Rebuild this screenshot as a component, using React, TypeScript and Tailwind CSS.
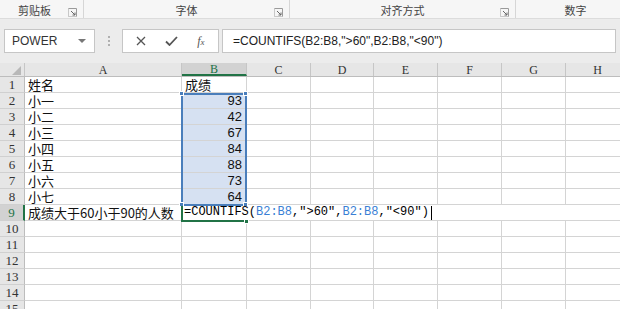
import React from "react"

const cols = [
  { k: "A", w: 157 },
  { k: "B", w: 65 },
  { k: "C", w: 64 },
  { k: "D", w: 63 },
  { k: "E", w: 64 },
  { k: "F", w: 64 },
  { k: "G", w: 64 },
  { k: "H", w: 64 },
]

const names = ["姓名", "小一", "小二", "小三", "小四", "小五", "小六", "小七", "成绩大于60小于90的人数"]
const scores = ["成绩", "93", "42", "67", "84", "88", "73", "64"]

const cjk = { fontFamily: '"Noto Sans CJK SC", "Liberation Sans", sans-serif' }
const serif = { fontFamily: '"Liberation Serif", serif' }
const mono = { fontFamily: '"Liberation Mono", "Noto Sans CJK SC", monospace' }

function Launcher() {
  return (
    <svg width="9" height="9" viewBox="0 0 9 9" className="ml-auto mt-[8px]">
      <path d="M0.5 0.5h8v8" fill="none" stroke="#9a9a9a" />
      <path d="M0.5 0.5v8h8" fill="none" stroke="#9a9a9a" strokeOpacity="0.5" />
      <path d="M3 3l4 4M7 4.5V7H4.5" fill="none" stroke="#666" />
    </svg>
  )
}

function Ribbon() {
  const groups = [
    { label: "剪贴板", w: 84, launcher: true, center: false },
    { label: "字体", w: 206, launcher: true, center: true },
    { label: "对齐方式", w: 226, launcher: true, center: true },
    { label: "数字", w: 120, launcher: false, center: true },
  ]
  return (
    <div className="flex h-[19px] bg-[#f6f6f6] border-b border-[#dcdcdc]" style={cjk}>
      {groups.map((g, i) => (
        <div
          key={i}
          className="relative flex h-full border-r border-[#d6d6d6] pr-[6px]"
          style={{ width: g.w, flex: "none" }}
        >
          <span
            className={`text-[11px] leading-[21px] text-[#444] ${g.center ? "absolute inset-x-0 text-center" : "pl-[18px]"}`}
          >
            {g.label}
          </span>
          {g.launcher && <Launcher />}
        </div>
      ))}
    </div>
  )
}

function FormulaBar() {
  return (
    <div className="flex items-center h-[44px] bg-[#ececec] px-[4px]">
      <div className="flex items-center w-[91px] h-[24px] bg-white border border-[#c6c6c6] pl-[7px] pr-[8px]">
        <span className="text-[12px] text-[#333]" style={{ fontFamily: '"Liberation Sans", sans-serif' }}>
          POWER
        </span>
        <svg width="8" height="5" viewBox="0 0 8 5" className="ml-auto">
          <path d="M0 0h8L4 4z" fill="#777" />
        </svg>
      </div>
      <div className="flex flex-col gap-[2px] w-[27px] items-center">
        <span className="w-[2px] h-[2px] bg-[#b0b0b0]" />
        <span className="w-[2px] h-[2px] bg-[#b0b0b0]" />
        <span className="w-[2px] h-[2px] bg-[#b0b0b0]" />
      </div>
      <div className="flex items-center justify-around w-[97px] h-[24px] bg-white border border-[#c6c6c6] px-[4px]">
        <svg width="10" height="10" viewBox="0 0 10 10">
          <path d="M1 1l8 8M9 1L1 9" stroke="#555" strokeWidth="1.3" />
        </svg>
        <svg width="13" height="10" viewBox="0 0 13 10">
          <path d="M1 5.5l3.5 3.5L12 1" fill="none" stroke="#555" strokeWidth="1.8" />
        </svg>
        <span className="text-[12px] italic text-[#555]" style={serif}>
          f<span className="text-[9px]">x</span>
        </span>
      </div>
      <div className="flex items-center flex-1 h-[24px] bg-white border border-[#c6c6c6] ml-[3px] pl-[10px]">
        <span className="text-[12px] text-[#222]" style={{ fontFamily: '"Liberation Sans", sans-serif' }}>
          =COUNTIFS(B2:B8,"&gt;60",B2:B8,"&lt;90")
        </span>
      </div>
    </div>
  )
}

function Sheet() {
  const rows = 15
  return (
    <div className="relative">
      {/* header row */}
      <div className="flex h-[14px] bg-[#e6e6e6] border-b border-[#bdbdbd]">
        <div className="relative w-[25px] flex-none border-r border-[#c6c6c6]">
          <svg width="9" height="9" viewBox="0 0 9 9" className="absolute right-[3px] bottom-[1px]">
            <path d="M9 0v9H0z" fill="#b8b8b8" />
          </svg>
        </div>
        {cols.map((c) => (
          <div
            key={c.k}
            className={`flex-none flex items-center justify-center text-[12px] leading-none border-r border-[#c6c6c6] ${
              c.k === "B" ? "bg-[#d2d2d2] text-[#217346] border-b-2 border-b-[#217346]" : "text-[#333]"
            }`}
            style={{ width: c.w, ...serif }}
          >
            {c.k}
          </div>
        ))}
      </div>
      {Array.from({ length: rows }).map((_, r) => {
        const rn = r + 1
        const isActive = rn === 9
        return (
          <div key={rn} className="flex h-[16px]">
            <div
              className={`w-[25px] flex-none flex items-center justify-center text-[13px] leading-none border-b border-[#d0d0d0] ${
                isActive
                  ? "bg-[#d2d2d2] text-[#217346] border-r-2 border-r-[#217346]"
                  : "bg-[#e6e6e6] text-[#333] border-r border-r-[#bdbdbd]"
              }`}
              style={serif}
            >
              {rn}
            </div>
            {cols.map((c) => {
              let content: React.ReactNode = null
              let cls = ""
              if (c.k === "A" && names[r]) {
                content = (
                  <span className="text-[13px] leading-[15px] text-[#111] whitespace-nowrap pl-[3px]" style={cjk}>
                    {names[r]}
                  </span>
                )
              }
              if (c.k === "B" && scores[r]) {
                if (r === 0) {
                  content = (
                    <span className="text-[13px] leading-[15px] text-[#111] pl-[3px]" style={cjk}>
                      {scores[r]}
                    </span>
                  )
                } else {
                  content = (
                    <span
                      className="text-[13px] leading-[15px] text-[#111] ml-auto pr-[4px]"
                      style={{ fontFamily: '"Liberation Sans", sans-serif' }}
                    >
                      {scores[r]}
                    </span>
                  )
                  cls = "bg-[#d6e1f2]"
                }
              }
              if (c.k === "B" && rn === 9) {
                content = (
                  <span className="relative z-10 text-[12px] leading-[15px] whitespace-nowrap pl-[2px] flex items-center" style={mono}>
                    <span className="text-black">=COUNTIFS(</span>
                    <span className="text-[#3a7fd5]">B2:B8</span>
                    <span className="text-black">,"&gt;60",</span>
                    <span className="text-[#3a7fd5]">B2:B8</span>
                    <span className="text-black">,"&lt;90")</span>
                    <span className="ml-[2px] w-px h-[14px] bg-black" />
                  </span>
                )
              }
              const hideRight = rn === 9 && c.k !== "A"
              return (
                <div
                  key={c.k}
                  className={`flex-none flex items-center border-b border-[#d4d4d4] ${
                    hideRight && c.k !== "H" ? "" : "border-r border-r-[#d4d4d4]"
                  } ${cls}`}
                  style={{ width: c.w }}
                >
                  {content}
                </div>
              )
            })}
          </div>
        )
      })}
      {/* selection B2:B8 */}
      <div className="pointer-events-none absolute left-[181px] top-[30px] w-[66px] h-[113px] border-2 border-[#4a7ebb]" />
      {[
        [179, 28],
        [243, 28],
        [179, 139],
        [243, 139],
      ].map(([x, y], i) => (
        <div
          key={i}
          className="absolute w-[5px] h-[5px] bg-[#4a7ebb] border border-white"
          style={{ left: x, top: y }}
        />
      ))}
      {/* active cell B9 */}
      <div className="pointer-events-none absolute left-[181px] top-[143px] w-[66px] h-[16px] border-l-2 border-b-2 border-[#217346]" />
      <div className="absolute left-[244px] top-[156px] w-[5px] h-[5px] bg-[#217346] border border-white" />
    </div>
  )
}

export default function App() {
  return (
    <div className="w-[620px] h-[309px] overflow-hidden bg-white">
      <Ribbon />
      <FormulaBar />
      <Sheet />
    </div>
  )
}
